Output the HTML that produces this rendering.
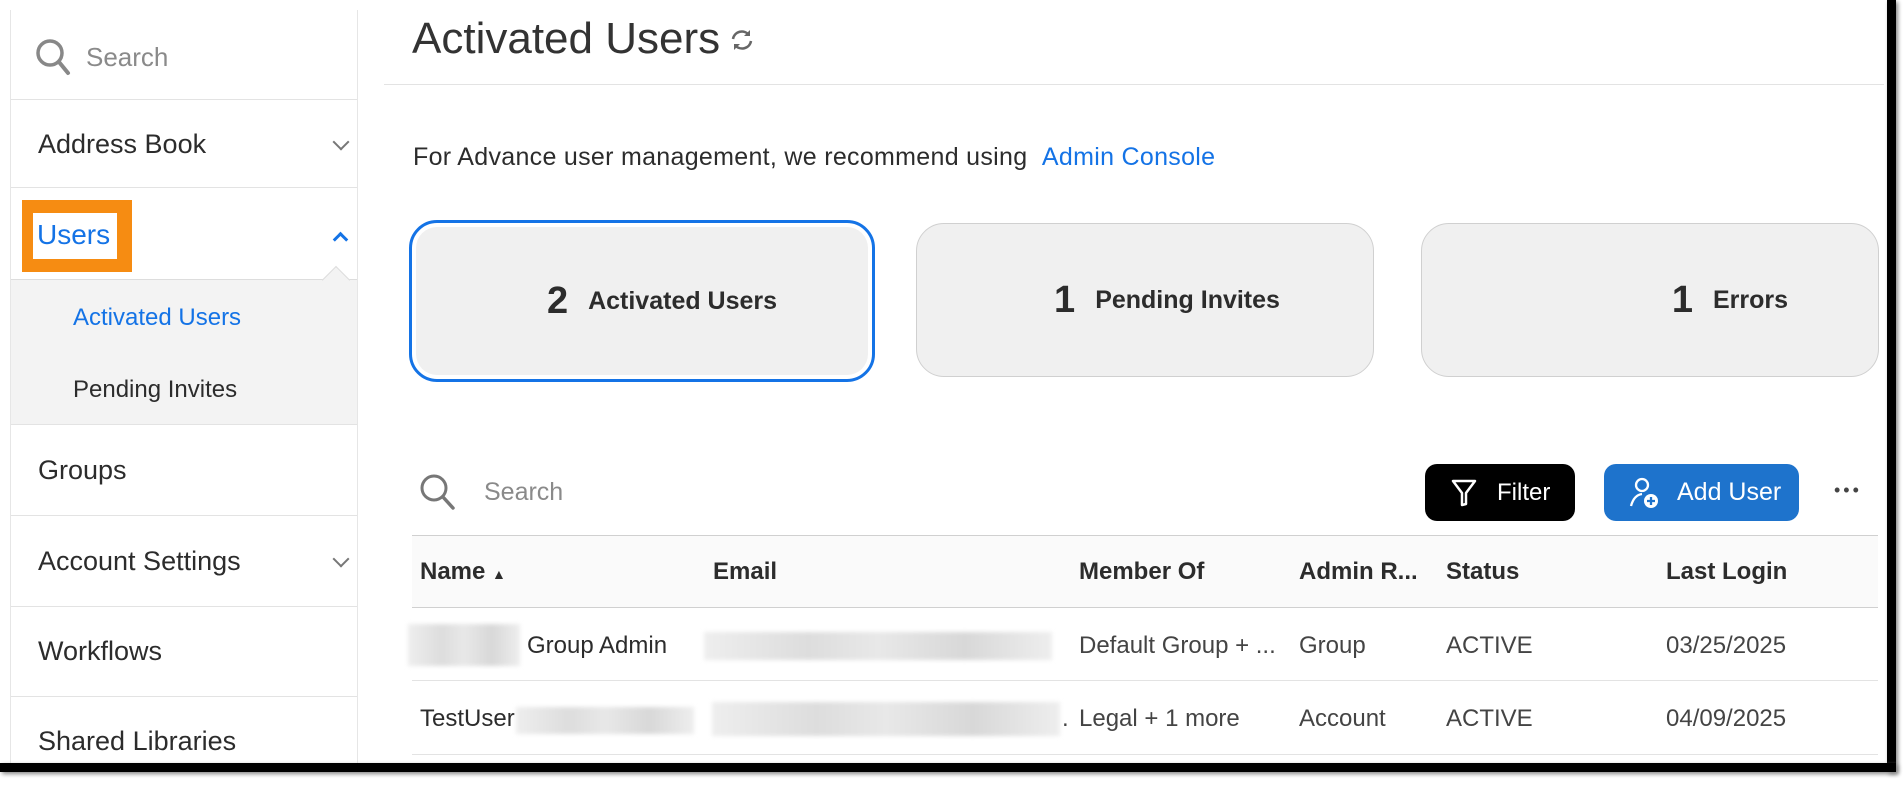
<!DOCTYPE html>
<html><head><meta charset="utf-8"><style>
*{box-sizing:border-box;margin:0;padding:0}
body{width:1904px;height:779px;background:#fff;font-family:"Liberation Sans",sans-serif;color:#2c2c2c;position:relative;overflow:hidden}
.a{position:absolute}
.side{left:10px;top:10px;width:348px;height:760px;border-left:1px solid #e6e6e6;border-right:1px solid #e6e6e6}
.row{position:absolute;left:0;width:346px;border-bottom:1px solid #e3e3e3;font-size:27px;color:#2c2c2c}
.row span{position:absolute;left:27px}
.chev{position:absolute;right:10px;width:12px;height:12px;border-right:2px solid #777;border-bottom:2px solid #777;transform:rotate(45deg)}
.card{position:absolute;background:#f0f0f0;border:1px solid #d0d0d0;border-radius:28px;display:flex;align-items:center;justify-content:center;font-size:25px;font-weight:bold;color:#2c2c2c}
.card b{font-size:38px;margin-right:20px}
.th{position:absolute;top:558px;font-size:24px;font-weight:bold;color:#2c2c2c}
.td{position:absolute;font-size:24px;color:#444}
.blur{position:absolute;background:linear-gradient(90deg,#eee,#ddd 30%,#e8e8e8 50%,#d8d8d8 75%,#eee);filter:blur(2px)}
</style></head><body>
<div class="a side">
  <div class="row" style="top:0;height:90px"><svg class="a" style="left:24px;top:28px" width="38" height="40" viewBox="0 0 38 40"><circle cx="15" cy="15" r="12" fill="none" stroke="#888" stroke-width="3.5"/><path d="M24 24 L33 35" stroke="#888" stroke-width="4" stroke-linecap="round"/></svg><span style="left:75px;top:32px;color:#8a8a8a;font-size:26px">Search</span></div>
  <div class="row" style="top:90px;height:88px"><span style="top:29px">Address Book</span><div class="chev" style="top:36px"></div></div>
  <div class="row" style="top:178px;height:92px;border-bottom:1px solid #ddd"></div>
  <div class="a" style="left:0;top:270px;width:346px;height:145px;background:#f3f3f3;border-bottom:1px solid #e3e3e3"></div>
  <div class="a" style="left:315px;top:260px;width:20px;height:20px;background:#f3f3f3;border-left:1px solid #ddd;border-top:1px solid #ddd;transform:rotate(45deg)"></div>
  <div class="a" style="left:62px;top:294px;font-size:24px;color:#1473e6">Activated Users</div>
  <div class="a" style="left:62px;top:366px;font-size:24px;color:#2c2c2c">Pending Invites</div>
  <div class="row" style="top:415px;height:91px"><span style="top:30px">Groups</span></div>
  <div class="row" style="top:506px;height:91px"><span style="top:30px">Account Settings</span><div class="chev" style="top:37px"></div></div>
  <div class="row" style="top:597px;height:90px"><span style="top:29px">Workflows</span></div>
  <div class="row" style="top:687px;height:90px;border-bottom:none"><span style="top:29px">Shared Libraries</span></div>
  <div class="a" style="left:324px;top:224px;width:11px;height:11px;border-left:3px solid #1473e6;border-top:3px solid #1473e6;transform:rotate(45deg)"></div>
</div>
<div class="a" style="left:22px;top:200px;width:110px;height:72px;background:#f68c12"></div>
<div class="a" style="left:33px;top:213px;width:84px;height:46px;background:#fff"></div>
<div class="a" style="left:37px;top:219px;font-size:28px;color:#1473e6">Users</div>

<div class="a" style="left:412px;top:14px;font-size:44px;color:#333">Activated Users</div>
<svg class="a" style="left:729px;top:27px" width="26" height="26" viewBox="0 0 26 26"><path d="M4 12 A9 9 0 0 1 20 8" fill="none" stroke="#666" stroke-width="2.5"/><path d="M22 14 A9 9 0 0 1 6 18" fill="none" stroke="#666" stroke-width="2.5"/><path d="M21 3 L21 9 L15 9Z" fill="#666"/><path d="M5 23 L5 17 L11 17Z" fill="#666"/></svg>
<div class="a" style="left:384px;top:84px;width:1500px;height:1px;background:#e3e3e3"></div>
<div class="a" style="left:413px;top:143px;font-size:25px;letter-spacing:0.3px;color:#2c2c2c">For Advance user management, we recommend using &nbsp;<span style="color:#1473e6">Admin Console</span></div>

<div class="card" style="left:409px;top:220px;width:466px;height:162px;border:3px solid #1473e6;box-shadow:inset 0 0 0 4px #fff;padding-left:40px"><b>2</b>Activated Users</div>
<div class="card" style="left:916px;top:223px;width:458px;height:154px;padding-left:44px"><b>1</b>Pending Invites</div>
<div class="card" style="left:1421px;top:223px;width:458px;height:154px;justify-content:flex-end;padding-right:90px"><b>1</b>Errors</div>

<svg class="a" style="left:418px;top:472px" width="40" height="40" viewBox="0 0 40 40"><circle cx="16" cy="16" r="12" fill="none" stroke="#777" stroke-width="3"/><path d="M25 25 L35 36" stroke="#777" stroke-width="3.5" stroke-linecap="round"/></svg>
<div class="a" style="left:484px;top:478px;font-size:25px;color:#8a8a8a">Search</div>
<div class="a" style="left:1425px;top:464px;width:150px;height:57px;background:#000;border-radius:12px;color:#fff;font-size:24px"><svg class="a" style="left:26px;top:15px" width="26" height="28" viewBox="0 0 26 28"><path d="M2 2 H24 L15 14 V25 L11 26 V14 Z" fill="none" stroke="#fff" stroke-width="2.5" stroke-linejoin="round"/></svg><span class="a" style="left:72px;top:15px">Filter</span></div>
<div class="a" style="left:1604px;top:464px;width:195px;height:57px;background:#1e73cc;border-radius:12px;color:#fff;font-size:25px"><svg class="a" style="left:25px;top:12px" width="32" height="34" viewBox="0 0 32 34"><circle cx="13" cy="9" r="6" fill="none" stroke="#fff" stroke-width="2.3"/><path d="M2 30 Q5 19 13 18" fill="none" stroke="#fff" stroke-width="2.3"/><circle cx="22" cy="25" r="7" fill="#fff"/><path d="M22 21 V29 M18 25 H26" stroke="#1e73cc" stroke-width="2.3"/></svg><span class="a" style="left:73px;top:14px">Add User</span></div>
<div class="a" style="left:1834px;top:480px;font-size:18px;color:#444;letter-spacing:3px">•••</div>

<div class="a" style="left:412px;top:535px;width:1466px;height:73px;background:#fafafa;border-top:1px solid #d0d0d0;border-bottom:1px solid #d0d0d0"></div>
<div class="th" style="left:420px">Name <span style="font-size:14px">▲</span></div>
<div class="th" style="left:713px">Email</div>
<div class="th" style="left:1079px">Member Of</div>
<div class="th" style="left:1299px">Admin R...</div>
<div class="th" style="left:1446px">Status</div>
<div class="th" style="left:1666px">Last Login</div>

<div class="blur" style="left:408px;top:624px;width:112px;height:42px"></div>
<div class="td" style="left:527px;top:632px;color:#2c2c2c">Group Admin</div>
<div class="blur" style="left:704px;top:632px;width:348px;height:28px"></div>
<div class="td" style="left:1079px;top:632px">Default Group + ...</div>
<div class="td" style="left:1299px;top:632px">Group</div>
<div class="td" style="left:1446px;top:632px">ACTIVE</div>
<div class="td" style="left:1666px;top:632px">03/25/2025</div>
<div class="a" style="left:412px;top:680px;width:1466px;height:1px;background:#e3e3e3"></div>

<div class="td" style="left:420px;top:705px;color:#2c2c2c">TestUser</div>
<div class="blur" style="left:516px;top:707px;width:178px;height:27px"></div>
<div class="blur" style="left:712px;top:702px;width:348px;height:34px"></div>
<div class="td" style="left:1062px;top:705px">.</div>
<div class="td" style="left:1079px;top:705px">Legal + 1 more</div>
<div class="td" style="left:1299px;top:705px">Account</div>
<div class="td" style="left:1446px;top:705px">ACTIVE</div>
<div class="td" style="left:1666px;top:705px">04/09/2025</div>
<div class="a" style="left:412px;top:754px;width:1466px;height:1px;background:#e3e3e3"></div>

<div class="a" style="left:1887px;top:0;width:9px;height:772px;background:#000;box-shadow:2px 2px 4px #888"></div>
<div class="a" style="left:0;top:763px;width:1896px;height:9px;background:#000;box-shadow:2px 2px 4px #888"></div>
</body></html>
